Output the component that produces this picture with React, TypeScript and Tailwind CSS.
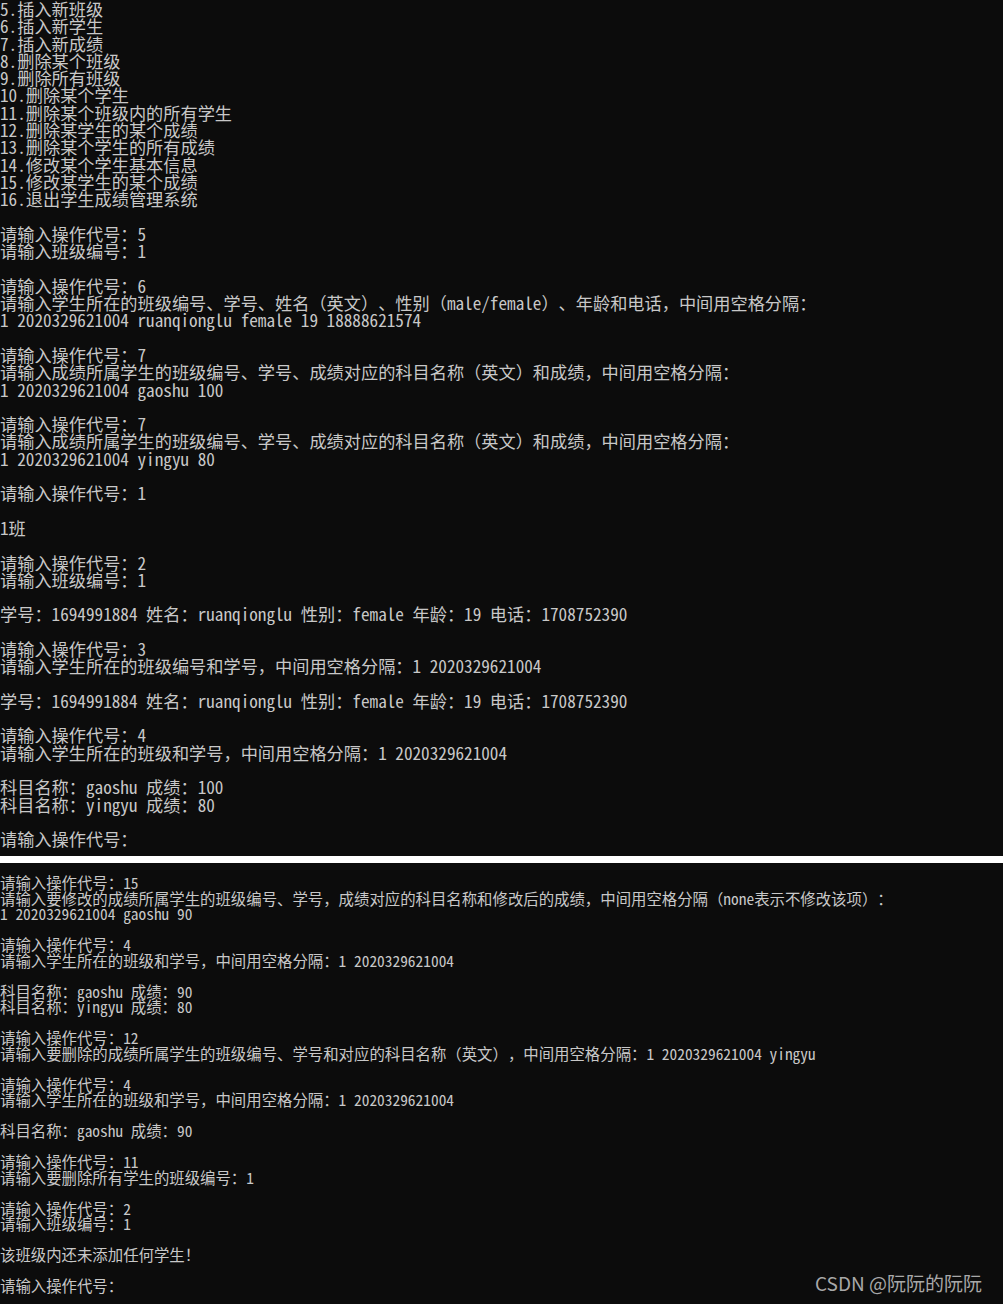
import React from "react";

const top: string[] = [
  "5.插入新班级",
  "6.插入新学生",
  "7.插入新成绩",
  "8.删除某个班级",
  "9.删除所有班级",
  "10.删除某个学生",
  "11.删除某个班级内的所有学生",
  "12.删除某学生的某个成绩",
  "13.删除某个学生的所有成绩",
  "14.修改某个学生基本信息",
  "15.修改某学生的某个成绩",
  "16.退出学生成绩管理系统",
  "",
  "请输入操作代号：5",
  "请输入班级编号：1",
  "",
  "请输入操作代号：6",
  "请输入学生所在的班级编号、学号、姓名（英文）、性别（male/female）、年龄和电话，中间用空格分隔：",
  "1 2020329621004 ruanqionglu female 19 18888621574",
  "",
  "请输入操作代号：7",
  "请输入成绩所属学生的班级编号、学号、成绩对应的科目名称（英文）和成绩，中间用空格分隔：",
  "1 2020329621004 gaoshu 100",
  "",
  "请输入操作代号：7",
  "请输入成绩所属学生的班级编号、学号、成绩对应的科目名称（英文）和成绩，中间用空格分隔：",
  "1 2020329621004 yingyu 80",
  "",
  "请输入操作代号：1",
  "",
  "1班",
  "",
  "请输入操作代号：2",
  "请输入班级编号：1",
  "",
  "学号：1694991884 姓名：ruanqionglu 性别：female 年龄：19 电话：1708752390",
  "",
  "请输入操作代号：3",
  "请输入学生所在的班级编号和学号，中间用空格分隔：1 2020329621004",
  "",
  "学号：1694991884 姓名：ruanqionglu 性别：female 年龄：19 电话：1708752390",
  "",
  "请输入操作代号：4",
  "请输入学生所在的班级和学号，中间用空格分隔：1 2020329621004",
  "",
  "科目名称：gaoshu 成绩：100",
  "科目名称：yingyu 成绩：80",
  "",
  "请输入操作代号：",
];

const bottom: string[] = [
  "请输入操作代号：15",
  "请输入要修改的成绩所属学生的班级编号、学号，成绩对应的科目名称和修改后的成绩，中间用空格分隔（none表示不修改该项）：",
  "1 2020329621004 gaoshu 90",
  "",
  "请输入操作代号：4",
  "请输入学生所在的班级和学号，中间用空格分隔：1 2020329621004",
  "",
  "科目名称：gaoshu 成绩：90",
  "科目名称：yingyu 成绩：80",
  "",
  "请输入操作代号：12",
  "请输入要删除的成绩所属学生的班级编号、学号和对应的科目名称（英文），中间用空格分隔：1 2020329621004 yingyu",
  "",
  "请输入操作代号：4",
  "请输入学生所在的班级和学号，中间用空格分隔：1 2020329621004",
  "",
  "科目名称：gaoshu 成绩：90",
  "",
  "请输入操作代号：11",
  "请输入要删除所有学生的班级编号：1",
  "",
  "请输入操作代号：2",
  "请输入班级编号：1",
  "",
  "该班级内还未添加任何学生！",
  "",
  "请输入操作代号：",
];

const mono =
  "font-['Noto_Sans_Mono_CJK_SC','Liberation_Mono','Noto_Sans_CJK_SC',monospace] [text-spacing-trim:space-all]";

export default function App() {
  return (
    <div className="w-[1003px] h-[1304px] bg-white flex flex-col overflow-hidden">
      <div
        className={`h-[856px] bg-[#0c0c0c] text-[#c8c8c8] text-[17.2px] leading-[17.3px] whitespace-pre ${mono} overflow-hidden`}
      >
        {top.map((l, i) => (
          <div key={i} className="h-[17.3px]">
            {l || "\u00a0"}
          </div>
        ))}
      </div>
      <div
        className={`relative mt-[7px] flex-1 bg-[#0c0c0c] text-[#c8c8c8] text-[15.4px] leading-[15.5px] whitespace-pre pt-[12px] ${mono} overflow-hidden`}
      >
        {bottom.map((l, i) => (
          <div key={i} className="h-[15.5px]">
            {l || "\u00a0"}
          </div>
        ))}
        <div className="absolute left-[815px] top-[409px] text-[19px] leading-[22px] text-[#a8a8a8] font-['Noto_Sans_CJK_SC',sans-serif]">
          CSDN @阮阮的阮阮
        </div>
      </div>
    </div>
  );
}
